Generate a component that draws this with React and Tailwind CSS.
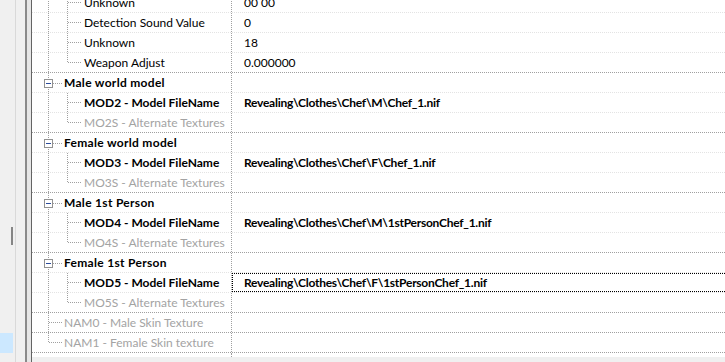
import React from 'react';

// tree rows of the record view
const rows = [
  { type: 'child', label: 'Unknown', value: '00 00' },
  { type: 'child', label: 'Detection Sound Value', value: '0' },
  { type: 'child', label: 'Unknown', value: '18' },
  { type: 'child', label: 'Weapon Adjust', value: '0.000000', last: true },
  { type: 'group', label: 'Male world model' },
  { type: 'child', label: 'MOD2 - Model FileName', value: 'Revealing\\Clothes\\Chef\\M\\Chef_1.nif', bold: true },
  { type: 'child', label: 'MO2S - Alternate Textures', muted: true, last: true },
  { type: 'group', label: 'Female world model' },
  { type: 'child', label: 'MOD3 - Model FileName', value: 'Revealing\\Clothes\\Chef\\F\\Chef_1.nif', bold: true },
  { type: 'child', label: 'MO3S - Alternate Textures', muted: true, last: true },
  { type: 'group', label: 'Male 1st Person' },
  { type: 'child', label: 'MOD4 - Model FileName', value: 'Revealing\\Clothes\\Chef\\M\\1stPersonChef_1.nif', bold: true },
  { type: 'child', label: 'MO4S - Alternate Textures', muted: true, last: true },
  { type: 'group', label: 'Female 1st Person' },
  { type: 'child', label: 'MOD5 - Model FileName', value: 'Revealing\\Clothes\\Chef\\F\\1stPersonChef_1.nif', bold: true, focused: true },
  { type: 'child', label: 'MO5S - Alternate Textures', muted: true, last: true },
  { type: 'leaf', label: 'NAM0 - Male Skin Texture', muted: true },
  { type: 'leaf', label: 'NAM1 - Female Skin texture', muted: true, last: true },
];

const LINE = '#a0a0a0';

const Dot = ({ x1, y1, x2, y2 }) => (
  <line x1={x1} y1={y1} x2={x2} y2={y2} stroke={LINE} strokeWidth="1" strokeDasharray="1 1" shapeRendering="crispEdges" />
);

// connector lines drawn in the first column
const Gutter = ({ row }) => {
  if (row.type === 'child') {
    return (
      <svg width="52" height="19" className="shrink-0">
        <Dot x1="16.5" y1="0" x2="16.5" y2="19" />
        <Dot x1="35.5" y1="0" x2="35.5" y2={row.last ? 10 : 19} />
        <Dot x1="36" y1="9.5" x2="50" y2="9.5" />
      </svg>
    );
  }
  if (row.type === 'group') {
    return (
      <svg width="32" height="19" className="shrink-0">
        <Dot x1="16.5" y1="0" x2="16.5" y2="19" />
        <Dot x1="21" y1="10.5" x2="30" y2="10.5" />
        <rect x="12.5" y="6.5" width="8" height="8" fill="#fff" stroke="#919191" shapeRendering="crispEdges" />
        <line x1="14" y1="10.5" x2="19" y2="10.5" stroke="#2c4c9c" shapeRendering="crispEdges" />
      </svg>
    );
  }
  return (
    <svg width="32" height="19" className="shrink-0">
      <Dot x1="16.5" y1="0" x2="16.5" y2={row.last ? 10 : 19} />
      <Dot x1="17" y1="9.5" x2="30" y2="9.5" />
    </svg>
  );
};

const TreeRow = ({ row }) => {
  const top = row.type === 'child' ? 'border-[#e3e3e3]' : 'border-[#a0a0a0]';
  const labelColor = row.muted ? 'text-[#a3a3a3]' : 'text-black';
  const weight = row.type === 'group' ? 'font-bold tracking-[0.3px]' : row.bold ? 'font-bold' : 'font-normal';
  return (
    <div className={`flex h-[20px] border-t border-dotted ${top}`}>
      <div className="flex w-[200px] shrink-0 items-stretch border-r border-dotted border-[#a0a0a0]">
        <Gutter row={row} />
        <span className={`whitespace-nowrap leading-[19px] ${labelColor} ${weight}`}>{row.label}</span>
      </div>
      <div className="flex-1 min-w-0">
        {row.focused ? (
          <div className="h-[19px] border border-r-0 border-dotted border-black pl-[11px] leading-[17px] font-bold tracking-[-0.25px] whitespace-nowrap">
            {row.value}
          </div>
        ) : (
          <div className={`pl-[12px] leading-[19px] whitespace-nowrap ${row.bold ? 'font-bold tracking-[-0.25px]' : ''}`}>{row.value}</div>
        )}
      </div>
    </div>
  );
};

export default function App() {
  return (
    <div className="flex h-[362px] w-[725px] overflow-hidden bg-white text-[12px] text-black font-['Lato','Noto_Sans',sans-serif]">
      {/* left list panel, cut off */}
      <div className="flex w-[15px] shrink-0 flex-col bg-[#f0f0f0]">
        <div className="h-[227px]" />
        <div className="ml-[11px] h-[18px] w-[2px] bg-[#858585]" />
        <div className="h-[88px]" />
        <div className="h-[20px] w-[13px] bg-[#cce8ff]" />
        <div className="flex-1" />
      </div>
      <div className="w-px shrink-0 bg-[#d9d9d9]" />
      {/* splitter */}
      <div className="w-[9px] shrink-0 bg-[#f0f0f0]" />
      <div className="w-[2px] shrink-0 bg-[#8a8a8a]" />
      <div className="w-[4px] shrink-0 bg-[#e6e6e6]" />
      <div className="w-px shrink-0 bg-[#646464]" />

      {/* record tree */}
      <div className="flex min-w-0 flex-1 flex-col mt-[-8px]">
        {rows.map((row, i) => (
          <TreeRow key={i} row={row} />
        ))}
        <div className="flex h-[5px] border-t border-dotted border-[#a0a0a0]">
          <div className="w-[200px] border-r border-dotted border-[#a0a0a0]" />
        </div>
        <div className="h-[5px] bg-[#f0f0f0]" />
      </div>
    </div>
  );
}
